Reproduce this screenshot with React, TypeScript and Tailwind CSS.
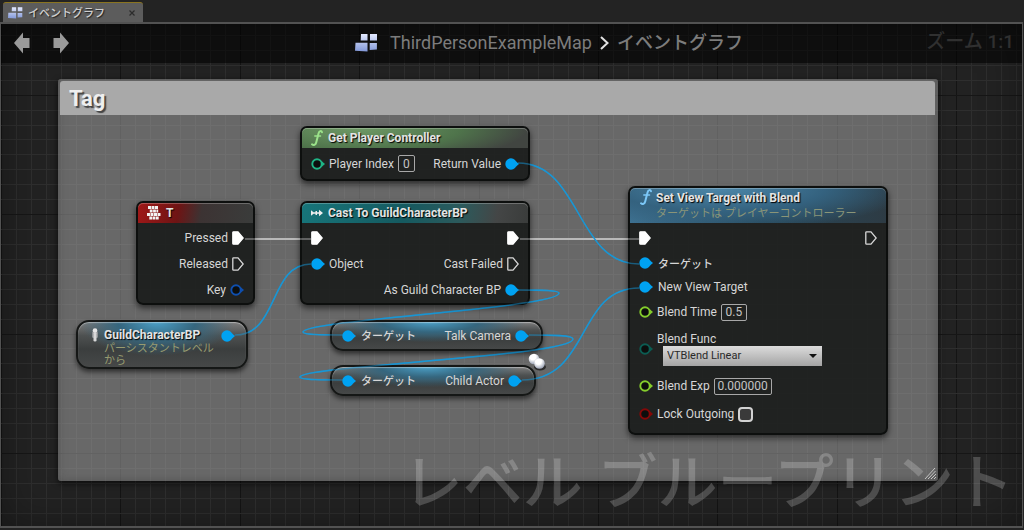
import React, { useState } from 'react';

type PinColor = 'blue' | 'navy' | 'mint' | 'lime' | 'teal' | 'red';

const pinColors: Record<PinColor, string> = {
  blue: '#00a2f2',
  navy: '#0f4fae',
  mint: '#1fb586',
  lime: '#84cc2c',
  teal: '#0b5c52',
  red: '#850808',
};

// minor lines are 8 to a major cell
const MINOR = 119.4 / 8;

function Grid() {
  const columns = Array.from({ length: 260 }, (_, i) => i);
  const rows = Array.from({ length: 160 }, (_, i) => i);
  return (
    <svg className="absolute inset-0 h-full w-full" aria-hidden="true">
      {columns.map(i => (
        <rect key={i} x={Math.round(i * MINOR)} y="0" width="1" height="100%" fill={i % 8 === 0 ? '#141414' : '#2e2e2e'} />
      ))}
      {rows.map(i => (
        <rect key={i} x="0" y={Math.round(i * MINOR + 11)} width="100%" height="1" fill={i % 8 === 4 ? '#161616' : '#2e2e2e'} />
      ))}
    </svg>
  );
}

function BlueprintIcon({ className }: { className: string }) {
  return (
    <svg viewBox="0 0 23 18" className={className} aria-hidden="true">
      <defs>
        <linearGradient id="bp" x1="0" y1="0" x2="0" y2="1">
          <stop offset="0" stopColor="#e4eaff" />
          <stop offset="1" stopColor="#8298d8" />
        </linearGradient>
      </defs>
      <path d="M6 0h6.500v6.500H5.700zM15 0h7v6.500H15zM.5 8.700h12v8.800L0 16.700zM14.700 9h7.200v6.500l-7.200.4z" fill="url(#bp)" />
    </svg>
  );
}

function NavArrow({ flip }: { flip?: boolean }) {
  return (
    <svg viewBox="0 0 16 22" className={flip ? 'h-[22px] w-4 -scale-x-100' : 'h-[22px] w-4'} aria-hidden="true">
      <path d="M0 11 9 0.500V6h6.500v10H9v5.500z" fill="#9a9a9a" />
    </svg>
  );
}

function Pin({ color, filled }: { color: PinColor; filled?: boolean }) {
  const c = pinColors[color];
  return (
    <svg viewBox="0 0 14 12" className="h-3 w-[14px] shrink-0" aria-hidden="true">
      <path d="M10.500 3 14 6l-3.500 3z" fill={c} />
      {filled ? (
        <circle cx="6" cy="6" r="5.700" fill={c} />
      ) : (
        <circle cx="6" cy="6" r="4.700" fill="#0c0e0d" stroke={c} strokeWidth="1.900" />
      )}
    </svg>
  );
}

function ExecPin({ filled }: { filled?: boolean }) {
  return (
    <svg viewBox="0 0 12 14" className="h-[14px] w-3 shrink-0" aria-hidden="true">
      <path
        d="M1.500 0.800H6L11.200 7 6 13.200H1.500Q.8 13.200.8 12.500V1.500Q.8.8 1.500.8z"
        fill={filled ? '#fff' : 'none'}
        stroke={filled ? '#fff' : '#d8d8d8'}
        strokeWidth="1.300"
      />
    </svg>
  );
}

function FunctionIcon({ color }: { color: string }) {
  return (
    <svg viewBox="0 0 12 16" className="h-4 w-3 shrink-0" fill="none" stroke={color} strokeLinecap="round" aria-hidden="true">
      <path d="M11 2.200C10.500.6 8.300.6 7.600 3.200L5.200 12.500C4.600 15 2.500 15.600 1 14.300" strokeWidth="2" />
      <path d="M3.800 6H9.500" strokeWidth="1.500" />
    </svg>
  );
}

function CastIcon() {
  return (
    <svg viewBox="0 0 12 8" className="h-2 w-3 shrink-0" fill="#eee" aria-hidden="true">
      <path d="M0 1.200 3.500 4 0 6.800zM2 3.200h7v1.600H2zM4.500 2h1.500v4H4.500zM8 .8 12 4 8 7.200z" />
    </svg>
  );
}

function KeyboardIcon() {
  return (
    <svg viewBox="0 0 14 14" className="h-[14px] w-[14px] shrink-0" fill="#f2f2f2" aria-hidden="true">
      <path d="M1 0h3v3H1zM4.500 0h3v3h-3zM8 0h3v3H8zM2.800 3.600h2.800v2.900H2.800zM6.100 3.600h2.800v2.900H6.100zM0 7.100h3V10H0zM3.500 7.100h3V10h-3zM7 7.100h3V10H7zM10.500 7.100h3V10h-3zM2.300 10.600h2.800v3H2.300zM5.600 10.600h2.800v3H5.600zM8.900 10.600h2.800v3H8.900zM9.400 3.600h1.800v2.900H9.400z" />
    </svg>
  );
}

// the little actor figure used on level references
function ActorIcon() {
  return (
    <svg viewBox="0 0 8 14" className="h-[14px] w-2 shrink-0" aria-hidden="true">
      <rect x="1" y="3" width="6" height="7" rx="1.500" fill="#8d9194" />
      <circle cx="4" cy="2.500" r="2.300" fill="#e6e6e6" />
      <rect x="2.500" y="4" width="3" height="9.500" rx="1.300" fill="#d8d8d8" />
    </svg>
  );
}

const nodeClass =
  'absolute rounded-[7px] border-2 border-[#0d0f0e] bg-[#1c1f1d]/95 shadow-[0_3px_6px_rgba(0,0,0,0.6)]';
const headClass =
  'flex items-center gap-[5px] rounded-t-[5px] pl-[9px] text-xs font-bold text-[#e4e4e4] [text-shadow:1px_1px_1px_#000] shadow-[inset_0_1px_0_rgba(255,255,255,0.25)]';
const rowClass = 'flex h-[26px] items-center justify-between';
const kanaClass = 'pt-[3px] text-[11px] leading-4 font-medium';
const fieldClass =
  'h-[17px] rounded-[2px] border border-[#a8a8a8] bg-transparent text-center text-xs leading-3 text-[#c4c4c4] outline-none';
const pillClass =
  'absolute rounded-[13px] border-2 border-[#151716] bg-[radial-gradient(ellipse_46%_75%_at_47%_0%,#4b9fc6_0%,#35667e_50%,transparent_100%),linear-gradient(#7d7d7d_0%,#4e5151_30%,#3b3e3e_60%,#464848_100%)] shadow-[0_3px_5px_rgba(0,0,0,0.55),inset_0_1px_1px_rgba(255,255,255,0.4)]';

function VariableNode({ className, name }: { className: string; name: string }) {
  return (
    <section className={`${pillClass} ${className}`}>
      <div className="flex h-[27px] items-center justify-between pr-3 pl-[10px]">
        <span className="flex items-center gap-[5px]">
          <Pin color="blue" filled />
          <span className={kanaClass}>ターゲット</span>
        </span>
        <span className="flex items-center gap-1">
          {name}
          <Pin color="blue" filled />
        </span>
      </div>
    </section>
  );
}

function Wires({ className }: { className: string }) {
  return (
    <svg className={`pointer-events-none absolute top-0 left-0 h-full w-full ${className}`} fill="none" aria-hidden="true">
      <g stroke="#c9c9c9" strokeWidth="1.500">
        <path d="M244 215H310" />
        <path d="M519 215H638" />
      </g>
      <g stroke="#1a96d4" strokeWidth="1.500">
        <path d="M517 139C580 139 575 240 638 240" />
        <path d="M234 311C278 311 268 240 310 240" />
        <path d="M517 266C540 266 558 266 558 269C558 284 302 296 302 308C302 311 325 311 342 311" />
        <path d="M528 311C550 311 572 311 572 315C572 332 299 342 299 353C299 356 325 356 342 356" />
        <path d="M521 356C590 356 575 264 638 264" />
      </g>
    </svg>
  );
}

export default function App() {
  const [playerIndex, setPlayerIndex] = useState('0');
  const [blendTime, setBlendTime] = useState('0.5');
  const [blendExp, setBlendExp] = useState('0.000000');
  const [lockOutgoing, setLockOutgoing] = useState(false);

  return (
    <div className="flex min-h-screen flex-col bg-[#232323] pr-px pb-[2px] font-[Roboto,'Noto_Sans_CJK_JP',sans-serif] text-xs text-[#d6d6d6]">
      <nav className="flex h-[22px] items-end pl-[3px]">
        <div className="flex h-5 w-[140px] items-center rounded-t-[3px] border-t border-[#8a7420] bg-[#5c5c5c] px-[5px]">
          <BlueprintIcon className="h-3 w-[15px]" />
          <a href="#graph" className={`${kanaClass} ml-[5px] text-[#d0d0d0] [text-shadow:1px_1px_1px_#222]`}>
            イベントグラフ
          </a>
          <button type="button" aria-label="閉じる" className="mr-[3px] ml-auto">
            <svg viewBox="0 0 6 6" className="h-[6px] w-[6px]" stroke="#2c2c2c" strokeWidth="1.200" aria-hidden="true">
              <path d="M0.500.5l5 5M5.500.5l-5 5" />
            </svg>
          </button>
        </div>
      </nav>

      <main id="graph" className="relative flex-1 overflow-hidden border border-y-2 border-[#525252] bg-[#222222]">
        <Grid />
        <div className="absolute inset-0 shadow-[inset_0_0_40px_rgba(0,0,0,0.35)]" />

        <header className="relative flex h-[39px] items-center bg-black/55 pb-[2px] pl-[13px]">
          <div className="flex gap-[23px]">
            <button type="button" aria-label="戻る">
              <NavArrow />
            </button>
            <button type="button" aria-label="進む">
              <NavArrow flip />
            </button>
          </div>
          <h1 className="flex flex-1 items-center justify-center pl-[7px] text-lg text-[#7c7c7c]">
            <BlueprintIcon className="mr-3 h-[18px] w-[23px]" />
            ThirdPersonExampleMap
            <svg viewBox="0 0 9 14" className="mx-2 h-[14px] w-[9px]" fill="none" stroke="#e2e2e2" strokeWidth="2" aria-hidden="true">
              <path d="M1 1l6.500 6L1 13" />
            </svg>
            <span className="font-medium">イベントグラフ</span>
          </h1>
          <p className="absolute top-1 right-2 text-[19px] leading-7 font-medium text-[#303030]">ズーム 1:1</p>
        </header>

        <section className="absolute top-[55px] left-[57px] h-[402px] w-[880px] rounded-[3px] bg-[#adadad]/50 p-[2px] pr-[3px] shadow-[0_2px_6px_rgba(0,0,0,0.7),inset_0_0_10px_rgba(70,70,70,0.6)]">
          <h2 className="h-[34px] rounded-t-[3px] bg-[#a9a9a9] pl-[9px] text-[22px] leading-9 font-bold text-[#efefef] [text-shadow:2px_2px_1px_#444]">
            Tag
          </h2>
          <svg viewBox="0 0 14 14" className="absolute right-0 bottom-0 h-[14px] w-[14px]" stroke="#c4c4c4" aria-hidden="true">
            <path d="M1 12 11 1M4 12 11.500 4M7 12 12 7M10 12l2-2" />
          </svg>
        </section>

        <Wires className="" />

        <section className={`${nodeClass} top-[102px] left-[299px] w-[230px]`}>
          <h3 className={`${headClass} h-5 bg-[radial-gradient(ellipse_75%_180%_at_25%_0%,#6f9a66_0%,#4f744b_60%,#414541_100%)]`}>
            <FunctionIcon color="#9be28a" />
            Get Player Controller
          </h3>
          <div className="flex h-[31px] items-center justify-between pr-[9px] pl-[9px]">
            <span className="flex items-center gap-1">
              <Pin color="mint" />
              <label htmlFor="player-index">Player Index</label>
              <input id="player-index" className={`${fieldClass} w-[17px]`} value={playerIndex} onChange={e => setPlayerIndex(e.target.value)} />
            </span>
            <span className="flex items-center gap-1">
              Return Value
              <Pin color="blue" filled />
            </span>
          </div>
        </section>

        <section className={`${nodeClass} top-[177px] left-[135px] w-[119px]`}>
          <h3 className={`${headClass} h-5 bg-[linear-gradient(100deg,#a01818_0%,#6e1414_35%,#3c3333_55%,#3a3c3b_100%)]`}>
            <KeyboardIcon />T
          </h3>
          <div className="pt-[2px] pr-[9px]">
            <div className={`${rowClass} gap-1`}>
              <span className="ml-auto">Pressed</span>
              <ExecPin filled />
            </div>
            <div className={`${rowClass} gap-1`}>
              <span className="ml-auto">Released</span>
              <ExecPin />
            </div>
            <div className={`${rowClass} gap-1`}>
              <span className="ml-auto">Key</span>
              <Pin color="navy" />
            </div>
          </div>
        </section>

        <section className={`${nodeClass} top-[177px] left-[299px] w-[230px]`}>
          <h3 className={`${headClass} h-5 bg-[linear-gradient(100deg,#17757a_0%,#155a60_45%,#2c5a5c_70%,#444646_86%,#3a3c3b_100%)]`}>
            <CastIcon />
            Cast To GuildCharacterBP
          </h3>
          <div className="pt-[2px] pr-[9px] pl-[9px]">
            <div className={rowClass}>
              <ExecPin filled />
              <ExecPin filled />
            </div>
            <div className={rowClass}>
              <span className="flex items-center gap-1">
                <Pin color="blue" filled />
                Object
              </span>
              <span className="flex items-center gap-1">
                Cast Failed
                <ExecPin />
              </span>
            </div>
            <div className={`${rowClass} gap-1`}>
              <span className="ml-auto">As Guild Character BP</span>
              <Pin color="blue" filled />
            </div>
          </div>
        </section>

        <section className={`${pillClass} top-[296px] left-[75px] w-[172px]`}>
          <div className="flex h-[45px] pt-[6px] pr-[11px] pl-[13px]">
            <ActorIcon />
            <div className="ml-[5px] w-[115px]">
              <h3 className="leading-[15px] font-bold text-[#e4e4e4] [text-shadow:1px_1px_1px_#000]">GuildCharacterBP</h3>
              <p className="text-[11px] leading-3 text-[#979b70]">
                パーシスタントレベル
                <br />
                から
              </p>
            </div>
            <div className="ml-auto pt-[2px]">
              <Pin color="blue" filled />
            </div>
          </div>
        </section>

        <VariableNode className="top-[296px] left-[329px] w-[213px]" name="Talk Camera" />
        <VariableNode className="top-[341px] left-[329px] w-[206px]" name="Child Actor" />

        <section className={`${nodeClass} top-[162px] left-[627px] w-[260px]`}>
          <div className="h-[35px] rounded-t-[5px] bg-[radial-gradient(ellipse_75%_120%_at_35%_0%,#4d88aa_0%,#34627f_55%,transparent_100%),linear-gradient(90deg,#3f7393_0%,#28485a_50%,#2d3b44_100%)] pt-px pl-[10px] shadow-[inset_0_1px_0_rgba(255,255,255,0.25)]">
            <div className="flex gap-1">
              <FunctionIcon color="#7cc8f8" />
              <div>
                <h3 className="leading-[18px] font-bold text-[#e4e4e4] [text-shadow:1px_1px_1px_#000]">Set View Target with Blend</h3>
                <p className="text-[11px] leading-[13px] text-[#8a9578]">ターゲットは プレイヤーコントローラー</p>
              </div>
            </div>
          </div>
          <div className="pt-[2px] pr-[9px] pb-1 pl-[9px]">
            <div className={rowClass}>
              <ExecPin filled />
              <ExecPin />
            </div>
            <div className="flex h-6 items-center gap-[5px]">
              <Pin color="blue" filled />
              <span className={kanaClass}>ターゲット</span>
            </div>
            <div className="flex h-6 items-center gap-[5px]">
              <Pin color="blue" filled />
              New View Target
            </div>
            <div className="flex h-[26px] items-center gap-1">
              <Pin color="lime" />
              <label htmlFor="blend-time">Blend Time</label>
              <input id="blend-time" className={`${fieldClass} w-[26px]`} value={blendTime} onChange={e => setBlendTime(e.target.value)} />
            </div>
            <div className="flex h-12 items-center gap-1">
              <Pin color="teal" />
              <div>
                <label htmlFor="blend-func" className="block leading-[14px]">
                  Blend Func
                </label>
                <div className="relative ml-[6px]">
                  <select
                    id="blend-func"
                    className="block h-5 w-[159px] appearance-none bg-linear-to-b from-[#dcdcdc] to-[#a4a4a4] pl-1 text-[11px] text-[#2a2a2a] outline-none"
                  >
                    <option>VTBlend Linear</option>
                    <option>VTBlend Cubic</option>
                    <option>VTBlend EaseIn</option>
                    <option>VTBlend EaseOut</option>
                  </select>
                  <svg viewBox="0 0 8 4" className="pointer-events-none absolute top-2 right-[5px] h-1 w-2" aria-hidden="true">
                    <path d="M0 0h8L4 4z" fill="#111" />
                  </svg>
                </div>
              </div>
            </div>
            <div className="flex h-[26px] items-center gap-1">
              <Pin color="lime" />
              <label htmlFor="blend-exp">Blend Exp</label>
              <input id="blend-exp" className={`${fieldClass} w-[58px]`} value={blendExp} onChange={e => setBlendExp(e.target.value)} />
            </div>
            <div className="flex h-[30px] items-center gap-1">
              <Pin color="red" />
              <label htmlFor="lock-outgoing">Lock Outgoing</label>
              <input
                id="lock-outgoing"
                type="checkbox"
                className="h-[15px] w-[15px] appearance-none rounded-[4px] border-2 border-[#d2d2d2] bg-[#3a3a3a] checked:bg-[#c8c8c8]"
                checked={lockOutgoing}
                onChange={e => setLockOutgoing(e.target.checked)}
              />
            </div>
          </div>
        </section>

        {/* second pass lets the wires show faintly over the nodes */}
        <Wires className="opacity-50" />

        {/* reroute handles */}
        <svg viewBox="0 0 18 18" className="absolute top-[329px] left-[527px] h-[18px] w-[18px]" aria-hidden="true">
          <defs>
            <radialGradient id="ball" cx="0.4" cy="0.3" r="0.7">
              <stop offset="0.4" stopColor="#ffffff" />
              <stop offset="1" stopColor="#9aa2b4" />
            </radialGradient>
          </defs>
          <ellipse cx="12" cy="14" rx="6" ry="3.500" fill="#2c2c2c" />
          <circle cx="6" cy="6" r="5.300" fill="url(#ball)" />
          <circle cx="11.500" cy="10.500" r="5.300" fill="url(#ball)" />
        </svg>

        <p className="pointer-events-none absolute right-2 bottom-0 text-[60px] leading-[84px] font-medium whitespace-nowrap text-white/20">
          レベル ブループリント
        </p>
      </main>
    </div>
  );
}
